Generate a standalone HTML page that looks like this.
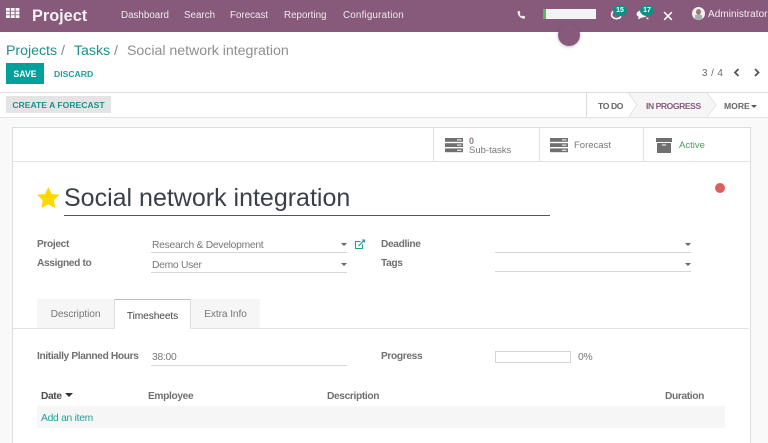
<!DOCTYPE html>
<html><head><meta charset="utf-8"><style>
html,body{margin:0;padding:0;width:768px;height:443px;overflow:hidden;background:#fff}
#r{position:relative;width:768px;height:443px;overflow:hidden;background:#fff;font-family:"Liberation Sans",sans-serif;font-size:10px;color:#666;filter:blur(.3px)}
#r div,#r svg{position:absolute}
.t{white-space:nowrap;line-height:12px}
.n{color:#f0e8ee;font-size:9.8px;top:10px}
.l{font-weight:bold;color:#707070;font-size:10.2px;letter-spacing:-.36px}
.v{font-size:10.3px;color:#777;letter-spacing:-.27px}
.u{height:1px;background:#d6d6d6}
.c{width:0;height:0;border-left:3px solid transparent;border-right:3px solid transparent;border-top:3px solid #666}
.tl{color:#1f9e99}
.b{font-size:8.6px;font-weight:bold}
.bc{font-size:14.2px;line-height:18px;top:42px;letter-spacing:-.03px}
.tb{font-size:10.2px;letter-spacing:-.1px;text-align:center}
</style></head><body><div id="r">
<div style="left:0;top:0;width:768px;height:32px;background:#875a7b"></div>
<svg style="left:6px;top:8px" width="14" height="11" viewBox="0 0 14 11"><g fill="#fff"><rect x="0" y="0" width="3.8" height="2.8"/><rect x="4.8" y="0" width="3.8" height="2.8"/><rect x="9.6" y="0" width="3.8" height="2.8"/><rect x="0" y="3.6" width="3.8" height="2.8"/><rect x="4.8" y="3.6" width="3.8" height="2.8"/><rect x="9.6" y="3.6" width="3.8" height="2.8"/><rect x="0" y="7.2" width="3.8" height="2.8"/><rect x="4.8" y="7.2" width="3.8" height="2.8"/><rect x="9.6" y="7.2" width="3.8" height="2.8"/></g></svg>
<div class="t" style="left:32px;top:6px;font-size:16.3px;line-height:20px;color:#f4eff3;font-weight:bold">Project</div>
<div class="t n" style="left:121px">Dashboard</div>
<div class="t n" style="left:184px">Search</div>
<div class="t n" style="left:230px">Forecast</div>
<div class="t n" style="left:284px">Reporting</div>
<div class="t n" style="left:343px;letter-spacing:.2px">Configuration</div>
<svg style="left:516px;top:10px" width="11" height="10" viewBox="0 0 11 10"><path d="M1.5 1.5 L3.3 .8 L4.4 3 L3.4 4 C4 5.3 4.8 6 6 6.6 L7 5.6 L9.2 6.8 L8.6 8.6 C5 9 1.5 5.5 1.5 1.5Z" fill="#fff"/></svg>
<div style="left:543px;top:9px;width:53px;height:10px;background:#f3f3f3"></div>
<div style="left:543px;top:9px;width:3px;height:10px;background:#5cb85c"></div>
<div style="left:558px;top:24px;width:22px;height:22px;border-radius:50%;background:#875a7b;box-shadow:0 1px 3px rgba(0,0,0,.25)"></div>
<svg style="left:610px;top:8px" width="14" height="13" viewBox="0 0 14 13"><path d="M5 2.5 A4.3 4.3 0 0 0 2 8.5 C4.5 11.5 9 11.2 11 8.5" fill="none" stroke="#fff" stroke-width="1.6"/></svg>
<div class="t" style="left:613px;top:5px;width:14px;height:11px;border-radius:50%;background:#0f8f86;color:#fff;font-size:7px;font-weight:bold;line-height:11px;text-align:center">15</div>
<svg style="left:636px;top:9px" width="14" height="12" viewBox="0 0 14 12"><ellipse cx="6" cy="5" rx="5.5" ry="3.6" fill="#fff"/><path d="M3 7 L2 10.5 L6.5 8Z" fill="#fff"/><path d="M8 9.5 Q11 9.8 12 8 L12.5 10.5 L9.5 9.5" fill="#fff"/></svg>
<div class="t" style="left:640px;top:5px;width:14px;height:11px;border-radius:50%;background:#0f8f86;color:#fff;font-size:7px;font-weight:bold;line-height:11px;text-align:center">17</div>
<svg style="left:663px;top:11px" width="10" height="10" viewBox="0 0 10 10"><path d="M1 1 L8.8 8.8 M8.8 1.2 L1.2 8.8" stroke="#fff" stroke-width="1.5" fill="none"/></svg>
<div style="left:692px;top:7px;width:13px;height:13px;border-radius:50%;background:#f2f0ef;overflow:hidden"><div style="left:4px;top:2px;width:5px;height:6px;border-radius:50%;background:#9a7a70"></div><div style="left:3px;top:8px;width:7px;height:6px;background:#a9b0b3"></div></div>
<div class="t" style="left:708px;top:9px;font-size:10px;color:#f3edf1;letter-spacing:.05px">Administrator</div>

<div class="t bc" style="left:6px;color:#1f8f8c">Projects</div>
<div class="t bc" style="left:61px;color:#888">/</div>
<div class="t bc" style="left:74px;color:#1f8f8c">Tasks</div>
<div class="t bc" style="left:114px;color:#888">/</div>
<div class="t bc" style="left:127px;color:#8f8f8f">Social network integration</div>
<div class="t" style="left:6px;top:63px;width:38px;height:21px;background:#00a09d;color:#fff;font-size:8.8px;font-weight:bold;line-height:22px;text-align:center">SAVE</div>
<div class="t" style="left:54px;top:68px;font-size:8.6px;font-weight:bold;color:#1f9e99">DISCARD</div>
<div class="t" style="left:702px;top:68px;font-size:9.7px;color:#666;letter-spacing:.5px">3 / 4</div>
<svg style="left:733px;top:68px" width="8" height="10" viewBox="0 0 8 10"><path d="M5.5 1 L2 4.5 L5.5 8" stroke="#555" stroke-width="1.8" fill="none"/></svg>
<svg style="left:753px;top:68px" width="8" height="10" viewBox="0 0 8 10"><path d="M2 1 L5.5 4.5 L2 8" stroke="#555" stroke-width="1.8" fill="none"/></svg>

<div style="left:0;top:92px;width:768px;height:1px;background:#ddd"></div>
<div style="left:0;top:117px;width:768px;height:326px;background:#f9f9f9"></div>
<div style="left:0;top:117px;width:768px;height:1px;background:#e4e4e4"></div>
<div class="t b" style="left:6px;top:96px;width:105px;height:17px;background:#e4e4e4;color:#1f8f8c;line-height:18px;text-align:center">CREATE A FORECAST</div>
<svg style="left:586px;top:93px" width="182" height="24" viewBox="0 0 182 24"><path d="M42.5 0 L121 0 L130 12 L121 24 L42.5 24 L51 12Z" fill="#f6f6f6"/><path d="M.5 0 V24" stroke="#ddd"/><path d="M42.5 0 L51 12 L42.5 24 M121 0 L130 12 L121 24" stroke="#e2e2e2" fill="none"/></svg>
<div class="t b" style="left:598px;top:100px;color:#666;letter-spacing:-.4px">TO DO</div>
<div class="t b" style="left:646px;top:100px;color:#875a7b;letter-spacing:-.45px">IN PROGRESS</div>
<div class="t b" style="left:724px;top:100px;color:#666">MORE</div>
<div class="c" style="left:751px;top:105px;border-top-color:#555"></div>

<div style="left:12px;top:127px;width:737px;height:316px;background:#fff;border:1px solid #ddd;border-bottom:0"></div>
<div style="left:13px;top:161px;width:737px;height:1px;background:#e2e2e2"></div>
<div style="left:433px;top:128px;width:1px;height:33px;background:#e2e2e2"></div>
<div style="left:539px;top:128px;width:1px;height:33px;background:#e2e2e2"></div>
<div style="left:643px;top:128px;width:1px;height:33px;background:#e2e2e2"></div>
<svg style="left:445px;top:138px" width="18" height="15" viewBox="0 0 18 15"><g fill="#707070"><rect y="0" width="18" height="3.8"/><rect y="5.2" width="18" height="3.8"/><rect y="10.4" width="18" height="3.8"/></g><g fill="#fff"><rect x="12" y="1.4" width="4.5" height="1"/><rect x="12" y="6.6" width="4.5" height="1"/><rect x="12" y="11.8" width="4.5" height="1"/></g></svg>
<div class="t" style="left:469px;top:135px;font-size:9px;font-weight:bold;color:#8a7f87">0</div>
<div class="t" style="left:469px;top:145px;font-size:9.5px;color:#777">Sub-tasks</div>
<svg style="left:550px;top:138px" width="18" height="15" viewBox="0 0 18 15"><g fill="#707070"><rect y="0" width="18" height="3.8"/><rect y="5.2" width="18" height="3.8"/><rect y="10.4" width="18" height="3.8"/></g><g fill="#fff"><rect x="12" y="1.4" width="4.5" height="1"/><rect x="12" y="6.6" width="4.5" height="1"/><rect x="12" y="11.8" width="4.5" height="1"/></g></svg>
<div class="t" style="left:574px;top:140px;font-size:9.5px;color:#777">Forecast</div>
<svg style="left:656px;top:138px" width="17" height="16" viewBox="0 0 17 16"><path d="M0 0H16V4H0Z M1 5H15V15H1Z" fill="#707070"/><rect x="6" y="6.5" width="4" height="1" fill="#fff"/></svg>
<div class="t" style="left:679px;top:140px;font-size:9.5px;color:#4f9a62">Active</div>
<div style="left:715px;top:183px;width:10px;height:10px;border-radius:50%;background:#d9605c"></div>

<svg style="left:36px;top:186px" width="25" height="24" viewBox="0 0 25 24"><path d="M12.3 .9 L15.6 8 L23.5 8.8 L17.8 14.2 L19.3 22 L12.3 18.2 L5.3 22 L6.8 14.2 L1.1 8.8 L9 8Z" fill="#ffd800"/></svg>
<div class="t" style="left:64px;top:184px;font-size:25px;line-height:29px;color:#3a3f4a">Social network integration</div>
<div style="left:64px;top:215px;width:486px;height:1px;background:#555"></div>

<div class="t l" style="left:37px;top:239px">Project</div>
<div class="t l" style="left:37px;top:258px">Assigned to</div>
<div class="t v" style="left:152px;top:240px">Research &amp; Development</div>
<div class="u" style="left:151px;top:252px;width:196px"></div>
<div class="c" style="left:341px;top:243px"></div>
<svg style="left:354px;top:239px" width="12" height="11" viewBox="0 0 12 11"><path d="M6.5 2.5H1.5V9.5H8.5V5.5" stroke="#1f9e99" fill="none" stroke-width="1.1"/><path d="M4.5 7 L9.5 2" stroke="#1f9e99" stroke-width="1.2"/><path d="M7.5 .5H11V4Z" fill="#1f9e99"/></svg>
<div class="t v" style="left:152px;top:260px">Demo User</div>
<div class="u" style="left:151px;top:272px;width:196px"></div>
<div class="c" style="left:341px;top:263px"></div>
<div class="t l" style="left:381px;top:239px">Deadline</div>
<div class="t l" style="left:381px;top:258px">Tags</div>
<div class="u" style="left:495px;top:252px;width:196px"></div>
<div class="c" style="left:685px;top:243px"></div>
<div class="u" style="left:495px;top:271px;width:196px"></div>
<div class="c" style="left:685px;top:263px"></div>

<div style="left:13px;top:328px;width:736px;height:1px;background:#e2e2e2"></div>
<div class="t tb" style="left:37px;top:299px;width:77px;height:29px;background:#f6f6f6;line-height:32px;color:#777">Description</div>
<div class="t tb" style="left:114px;top:299px;width:77px;height:30px;background:#fff;border:1px solid #ddd;border-top:1px solid #c9b6c4;border-bottom:0;box-sizing:border-box;line-height:33px;color:#444">Timesheets</div>
<div class="t tb" style="left:191px;top:299px;width:69px;height:29px;background:#f6f6f6;line-height:32px;color:#777">Extra Info</div>

<div class="t l" style="left:37px;top:351px">Initially Planned Hours</div>
<div class="t v" style="left:152px;top:352px">38:00</div>
<div class="u" style="left:151px;top:365px;width:196px"></div>
<div class="t l" style="left:381px;top:351px">Progress</div>
<div style="left:495px;top:351px;width:74px;height:10px;border:1px solid #d4d4d4;background:#fff"></div>
<div class="t v" style="left:578px;top:352px">0%</div>

<div class="t l" style="left:41px;top:391px;color:#4c4c4c">Date</div>
<div class="c" style="left:65px;top:393px;border-left-width:4px;border-right-width:4px;border-top:4px solid #333"></div>
<div class="t l" style="left:148px;top:391px">Employee</div>
<div class="t l" style="left:327px;top:391px">Description</div>
<div class="t l" style="left:665px;top:391px">Duration</div>
<div style="left:37px;top:406px;width:688px;height:22px;background:#f6f6f6"></div>
<div class="t tl v" style="left:41px;top:413px;color:#1f9e99">Add an item</div>
</div></body></html>
